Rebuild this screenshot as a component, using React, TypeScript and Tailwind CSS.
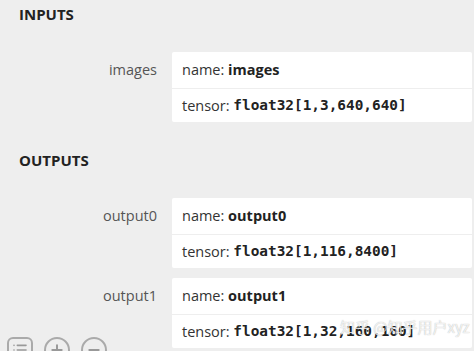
import { List, Plus, Minus } from "lucide-react";

type Arg = { label: string; name: string; tensor: string };

const inputs: Arg[] = [{ label: "images", name: "images", tensor: "float32[1,3,640,640]" }];
const outputs: Arg[] = [
  { label: "output0", name: "output0", tensor: "float32[1,116,8400]" },
  { label: "output1", name: "output1", tensor: "float32[1,32,160,160]" },
];

const sans = { fontFamily: '"Open Sans", "Noto Sans", sans-serif' };
const mono = { fontFamily: '"DejaVu Sans Mono", "Liberation Mono", monospace' };

function ArgRow({ arg, first }: { arg: Arg; first: boolean }) {
  return (
    <div className={`flex ${first ? "mt-[29px]" : "mt-[10px]"}`}>
      <div className="w-[157px] shrink-0 h-[36px] flex items-center justify-end text-[14.5px] text-[#555]">
        {arg.label}
      </div>
      <div className="ml-[15px] mr-[2px] flex-1 bg-white rounded-[2px]">
        <div className="h-[36px] flex items-center px-[10px] text-[14.5px] text-[#333]">
          name:&nbsp;<span className="font-bold text-[#222]">{arg.name}</span>
        </div>
        <div className="h-px bg-[#eeeeee]" />
        <div className="h-[33px] flex items-center px-[10px] text-[14.5px] text-[#333]">
          tensor:&nbsp;
          <span className="font-bold text-[#222] text-[14.4px]" style={mono}>
            {arg.tensor}
          </span>
        </div>
      </div>
    </div>
  );
}

function Section({ title, args, top }: { title: string; args: Arg[]; top: string }) {
  return (
    <div>
      <div className={`${top} pl-[19px] leading-[18px] text-[15px] font-bold text-[#222]`}>{title}</div>
      {args.map((a, i) => (
        <ArgRow key={a.name} arg={a} first={i === 0} />
      ))}
    </div>
  );
}

export default function App() {
  return (
    <div className="relative w-[474px] h-[351px] overflow-hidden bg-[#eeeeee]" style={sans}>
      <Section title="INPUTS" args={inputs} top="pt-[5px]" />
      <Section title="OUTPUTS" args={outputs} top="mt-[29px]" />

      <div className="absolute left-[7px] top-[337px] flex gap-[11px] text-[#999]">
        <div className="w-[26px] h-[26px] rounded-[6px] border-2 border-[#aaa] flex items-center justify-center">
          <List size={16} strokeWidth={2.5} />
        </div>
        <div className="w-[26px] h-[26px] rounded-full border-2 border-[#aaa] flex items-center justify-center">
          <Plus size={16} strokeWidth={3} />
        </div>
        <div className="w-[26px] h-[26px] rounded-full border-2 border-[#aaa] flex items-center justify-center">
          <Minus size={16} strokeWidth={3} />
        </div>
      </div>

      <div
        className="absolute left-[340px] top-[316px] text-[15px] text-white/80 [text-shadow:0_0_1px_rgba(0,0,0,0.35)]"
        style={{ fontFamily: '"Noto Sans CJK SC", sans-serif' }}
      >
        知乎 @知乎用户xyz
      </div>
    </div>
  );
}
